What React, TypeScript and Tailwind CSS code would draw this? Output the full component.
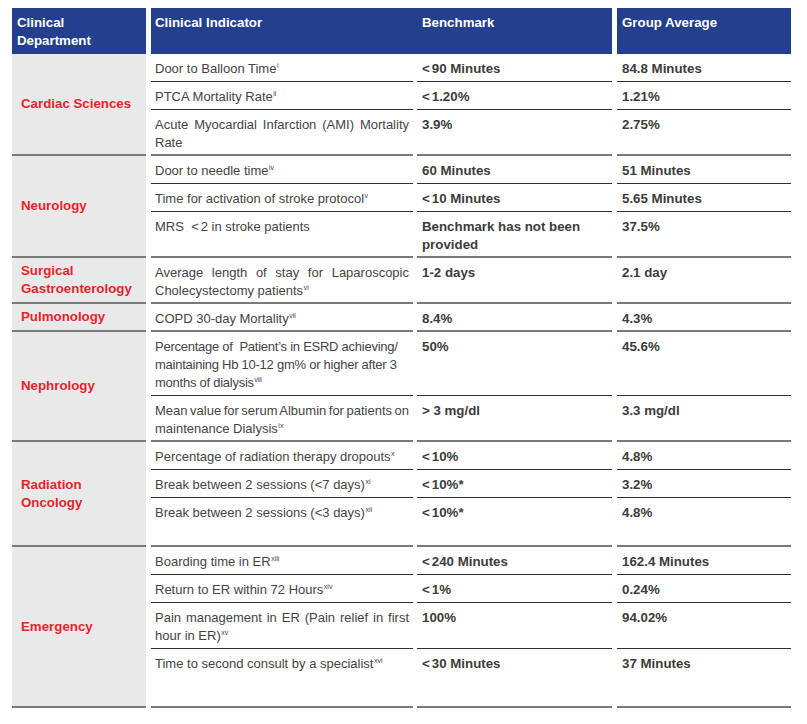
import React from "react";

type Row = { ind: React.ReactNode; bench: string | React.ReactNode; avg: string; h: number };
type Group = { dept: React.ReactNode; rows: Row[] };

const Sup = ({ c }: { c: string }) => (
  <sup className="text-[7px] -top-[5px] ml-[0.5px]">{c}</sup>
);

const J = ({ children, extra }: { children: React.ReactNode; extra?: string }) => (
  <span className={"block text-justify [text-align-last:justify] " + (extra ?? "")}>{children}</span>
);

const Val = ({ v }: { v: string | React.ReactNode }) => {
  if (typeof v === "string" && v.startsWith("<")) {
    return (
      <>
        <span className="mr-[2px]">&lt;</span>
        {v.slice(1)}
      </>
    );
  }
  return <>{v}</>;
};

const groups: Group[] = [
  {
    dept: "Cardiac Sciences",
    rows: [
      { ind: <>Door to Balloon Time<Sup c="i" /></>, bench: "<90 Minutes", avg: "84.8 Minutes", h: 28 },
      { ind: <>PTCA Mortality Rate<Sup c="ii" /></>, bench: "<1.20%", avg: "1.21%", h: 28 },
      {
        ind: (
          <>
            <J>Acute Myocardial Infarction (AMI) Mortality</J>Rate
          </>
        ),
        bench: "3.9%",
        avg: "2.75%",
        h: 46,
      },
    ],
  },
  {
    dept: "Neurology",
    rows: [
      { ind: <>Door to needle time<Sup c="iv" /></>, bench: "60 Minutes", avg: "51 Minutes", h: 28 },
      { ind: <>Time for activation of stroke protocol<Sup c="v" /></>, bench: "<10 Minutes", avg: "5.65 Minutes", h: 28 },
      {
        ind: <>MRS&nbsp; <span className="mr-[2px]">&lt;</span>2 in stroke patients</>,
        bench: (
          <>
            Benchmark has not been
            <br />
            provided
          </>
        ),
        avg: "37.5%",
        h: 46,
      },
    ],
  },
  {
    dept: (
      <>
        Surgical
        <br />
        Gastroenterology
      </>
    ),
    rows: [
      {
        ind: (
          <>
            <J>Average length of stay for Laparoscopic</J>Cholecystectomy patients<Sup c="vi" />
          </>
        ),
        bench: "1-2 days",
        avg: "2.1 day",
        h: 46,
      },
    ],
  },
  {
    dept: "Pulmonology",
    rows: [{ ind: <>COPD 30-day Mortality<Sup c="vii" /></>, bench: "8.4%", avg: "4.3%", h: 28 }],
  },
  {
    dept: "Nephrology",
    rows: [
      {
        ind: (
          <span className="block tracking-[-0.25px]">
            Percentage of&nbsp; Patient’s in ESRD achieving/
            <br />
            maintaining Hb 10-12 gm% or higher after 3
            <br />
            months of dialysis<Sup c="viii" />
          </span>
        ),
        bench: "50%",
        avg: "45.6%",
        h: 64,
      },
      {
        ind: (
          <>
            <J extra="[word-spacing:-1.5px]">Mean value for serum Albumin for patients on</J>maintenance Dialysis
            <Sup c="ix" />
          </>
        ),
        bench: "> 3 mg/dl",
        avg: "3.3 mg/dl",
        h: 46,
      },
    ],
  },
  {
    dept: (
      <>
        Radiation
        <br />
        Oncology
      </>
    ),
    rows: [
      { ind: <>Percentage of radiation therapy dropouts<Sup c="x" /></>, bench: "<10%", avg: "4.8%", h: 28 },
      { ind: <>Break between 2 sessions (&lt;7 days)<Sup c="xi" /></>, bench: "<10%*", avg: "3.2%", h: 28 },
      { ind: <>Break between 2 sessions (&lt;3 days)<Sup c="xii" /></>, bench: "<10%*", avg: "4.8%", h: 49 },
    ],
  },
  {
    dept: "Emergency",
    rows: [
      { ind: <>Boarding time in ER<Sup c="xiii" /></>, bench: "<240 Minutes", avg: "162.4 Minutes", h: 28 },
      { ind: <>Return to ER within 72 Hours<Sup c="xiv" /></>, bench: "<1%", avg: "0.24%", h: 28 },
      {
        ind: (
          <>
            <J>Pain management in ER (Pain relief in first</J>hour in ER)<Sup c="xv" />
          </>
        ),
        bench: "100%",
        avg: "94.02%",
        h: 46,
      },
      { ind: <>Time to second consult by a specialist<Sup c="xvi" /></>, bench: "<30 Minutes", avg: "37 Minutes", h: 59 },
    ],
  },
];

export default function App() {
  return (
    <div className="w-[807px] h-[724px] bg-white pt-[8px] pl-[12px] font-['Liberation_Sans',Arial,Helvetica,sans-serif] leading-[18px]">
      <div className="flex w-[779px] h-[46px] text-white font-bold text-[13.3px]">
        <div className="w-[134px] bg-[#243f8d] pl-[5px] pt-[6px]">
          Clinical
          <br />
          Department
        </div>
        <div className="ml-[5px] w-[461px] bg-[#243f8d] flex pt-[6px]">
          <div className="w-[266px] pl-[4px]">Clinical Indicator</div>
          <div className="pl-[5px]">Benchmark</div>
        </div>
        <div className="ml-[5px] w-[174px] bg-[#243f8d] pl-[5px] pt-[6px]">Group Average</div>
      </div>
      {groups.map((g, gi) => (
        <div key={gi} className="flex w-[779px]">
          <div className="w-[134px] shrink-0 bg-[#e9e9e9] border-b-2 border-[#7a7a7a] flex items-center pl-[9px] text-[#ea1f2b] font-bold text-[13.3px]">
            <div>{g.dept}</div>
          </div>
          <div className="ml-[5px] flex flex-col">
            {g.rows.map((r, i) => {
              const last = i === g.rows.length - 1;
              const b = last ? "border-b-2 border-[#7a7a7a]" : "border-b border-[#2e2e2e]";
              return (
                <div key={i} className="flex" style={{ height: r.h }}>
                  <div className={"w-[262px] pl-[4px] pr-[4px] pt-[6px] text-[13px] text-[#444444] " + b}>{r.ind}</div>
                  <div className={"ml-[4px] w-[195px] pl-[5px] pt-[6px] text-[13.3px] font-bold text-[#3c3c3c] " + b}>
                    <Val v={r.bench} />
                  </div>
                  <div className={"ml-[5px] w-[174px] pl-[5px] pt-[6px] text-[13.3px] font-bold text-[#3c3c3c] " + b}>{r.avg}</div>
                </div>
              );
            })}
          </div>
        </div>
      ))}
    </div>
  );
}
